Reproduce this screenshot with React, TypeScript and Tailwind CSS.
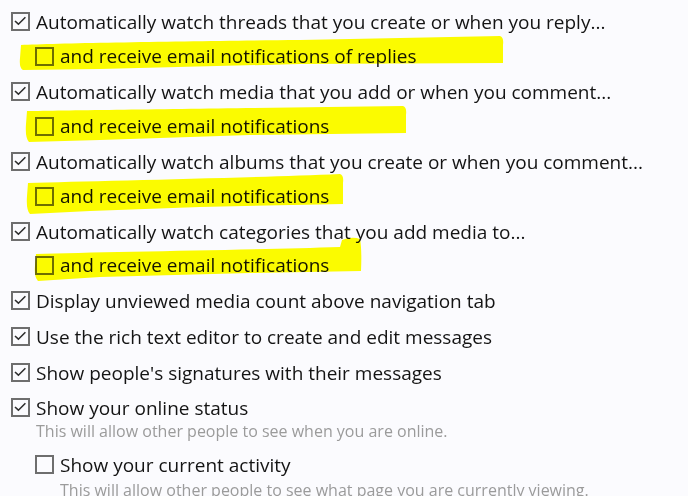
import React from "react";

type Pref = {
  label: string;
  checked: boolean;
  sub?: string;
  hint?: string;
  child?: { label: string; hint: string };
};

const prefs: Pref[] = [
  {
    label: "Automatically watch threads that you create or when you reply...",
    checked: true,
    sub: "and receive email notifications of replies",
  },
  {
    label: "Automatically watch media that you add or when you comment...",
    checked: true,
    sub: "and receive email notifications",
  },
  {
    label: "Automatically watch albums that you create or when you comment...",
    checked: true,
    sub: "and receive email notifications",
  },
  {
    label: "Automatically watch categories that you add media to...",
    checked: true,
    sub: "and receive email notifications",
  },
  { label: "Display unviewed media count above navigation tab", checked: true },
  { label: "Use the rich text editor to create and edit messages", checked: true },
  { label: "Show people's signatures with their messages", checked: true },
  {
    label: "Show your online status",
    checked: true,
    hint: "This will allow other people to see when you are online.",
    child: {
      label: "Show your current activity",
      hint: "This will allow other people to see what page you are currently viewing.",
    },
  },
];

function Box({ checked }: { checked: boolean }) {
  return (
    <span className="w-[19px] h-[19px] shrink-0 border-2 border-[#6e6e6e] flex items-center justify-center">
      {checked && (
        <svg width="15" height="15" viewBox="0 0 15 15">
          <path d="M2 7 L5.4 10.2 L12.4 3.2" fill="none" stroke="#2f2f2f" strokeWidth="1.6" />
        </svg>
      )}
    </span>
  );
}

function Row({
  label,
  checked,
  className,
  textClass = "pt-[2px]",
}: {
  label: string;
  checked: boolean;
  className: string;
  textClass?: string;
}) {
  return (
    <div className={`flex items-center gap-[6px] ${className}`}>
      <Box checked={checked} />
      <span className={`whitespace-nowrap ${textClass}`}>{label}</span>
    </div>
  );
}

// yellow marker strokes drawn over the sub options
function Highlights() {
  return (
    <svg className="absolute inset-0 pointer-events-none mix-blend-multiply" width="688" height="496">
      <g fill="#ffff00">
        <path d="M21 45 C60 43 200 41 300 40 L500 36 Q504 37 503 45 L503 63 L300 64 L100 69 L23 70 Q19 68 20 58 Z" />
        <path d="M27 111 C80 110 250 108 403 106 Q407 107 406 115 L406 133 L250 135 L100 140 L29 142 Q25 138 26 124 Z" />
        <path d="M28 183 C90 181 250 178 340 174 Q344 175 343 183 L343 204 L200 207 L90 211 L30 214 Q26 210 27 196 Z" />
        <path d="M36 254 C100 252 250 250 340 247 L342 240 Q352 236 360 239 Q362 250 361 271 L250 273 L100 277 L38 281 Q34 277 35 266 Z" />
      </g>
    </svg>
  );
}

export default function App() {
  return (
    <div
      className="relative w-[688px] h-[496px] overflow-hidden bg-[#fbfbfe] text-[#141414] text-[19px]"
      style={{ fontFamily: '"Open Sans", "DejaVu Sans", sans-serif' }}
    >
      <div className="flex flex-col pt-[4px] pl-[11px]">
        {prefs.map((p, i) => (
          <div key={p.label} className="flex flex-col">
            <Row
              label={p.label}
              checked={p.checked}
              className={p.sub || p.hint ? "h-[34px]" : "h-[36px]"}
            />
            {p.sub && (
              <Row
                label={p.sub}
                checked={false}
                textClass=""
                className={`${i === 3 ? "h-[34px]" : "h-[36px]"} pl-[24px]`}
              />
            )}
            {p.hint && (
              <div className="-mt-[3px] h-[26px] pl-[25px] leading-[20px] text-[16px] text-[#9b9b9b] whitespace-nowrap">
                {p.hint}
              </div>
            )}
            {p.child && (
              <div className="flex flex-col pl-[24px]">
                <Row label={p.child.label} checked={false} className="h-[34px]" />
                <div className="-mt-[1px] pl-[25px] leading-[20px] text-[16px] text-[#9b9b9b] whitespace-nowrap">
                  {p.child.hint}
                </div>
              </div>
            )}
          </div>
        ))}
      </div>
      <Highlights />
    </div>
  );
}
